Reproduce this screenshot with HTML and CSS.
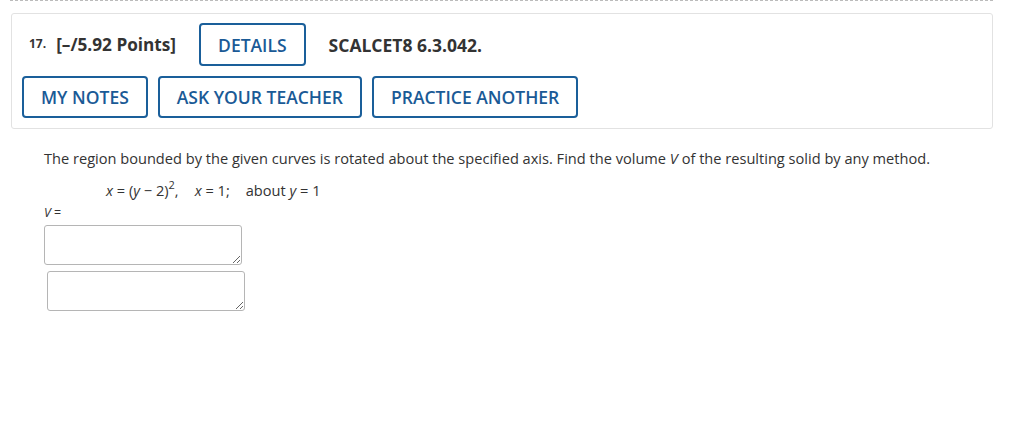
FILE: index.html
```html
<!DOCTYPE html>
<html lang="en">
<head>
    <meta charset="UTF-8">
    <title>SCALCET8 6.3.042</title>
    <link rel="stylesheet" href="styles.css">
</head>
<body>
    <div class="page">
        <div class="prev-question"></div>

        <div class="question-header">
            <div class="header-row">
                <span class="q-number">17.</span>
                <span class="q-points">[&ndash;/5.92 Points]</span>
                <button class="btn">DETAILS</button>
                <span class="q-ref">SCALCET8 6.3.042.</span>
            </div>
            <div class="action-row">
                <button class="btn">MY NOTES</button>
                <button class="btn">ASK YOUR TEACHER</button>
                <button class="btn">PRACTICE ANOTHER</button>
            </div>
        </div>

        <div class="question-body">
            <p class="prompt">The region bounded by the given curves is rotated about the specified axis. Find the volume <i>V</i> of the resulting solid by any method.</p>
            <p class="curves"><i>x</i> = (<i>y</i> &minus; 2)<sup>2</sup>,<span class="sep"></span><i>x</i> = 1;<span class="sep"></span>about <i>y</i> = 1</p>
            <div class="answer-label"><i>V</i> =</div>
            <textarea class="answer"></textarea>
            <textarea class="answer answer-second"></textarea>
        </div>
    </div>
</body>
</html>
```

FILE: styles.css
```css
* {
    box-sizing: border-box;
    margin: 0;
    padding: 0;
}
body {
    font-family: "Open Sans", Arial, sans-serif;
    color: #333;
    background-color: #fff;
}
.page {
    padding: 0 19px 0 10px;
}
.prev-question {
    border-top: 1px dashed #bbb;
}
.question-header {
    margin: 12px 0 0 1px;
    border: 1px solid #e2e2e2;
    border-radius: 3px;
    padding: 9px 10px 10px 10px;
}
.header-row {
    display: flex;
    align-items: center;
    padding-left: 7px;
}
.q-number {
    font-size: 12px;
    font-weight: 700;
    margin-right: 10px;
    position: relative;
    top: -1px;
}
.q-points {
    font-size: 17.2px;
    font-weight: 700;
    margin-right: 23px;
}
.q-ref {
    font-size: 17.5px;
    font-weight: 700;
    margin-left: 23px;
}
.action-row {
    display: flex;
    gap: 10px;
    margin-top: 10px;
}
.btn {
    font-family: "Open Sans", Arial, sans-serif;
    font-size: 17.5px;
    font-weight: 600;
    color: #1a5a96;
    background-color: #fff;
    border: 2px solid #1a5f9a;
    border-radius: 4px;
    height: 42px;
    padding: 0 17px;
}
.header-row .btn {
    height: 43px;
}
.question-body {
    padding: 19px 0 0 34px;
    font-size: 14.6px;
}
.prompt {
    line-height: 20px;
}
.curves {
    margin: 12px 0 0 62px;
    line-height: 20px;
}
.curves sup {
    font-size: 11px;
    line-height: 0;
    vertical-align: 7px;
}
.sep {
    display: inline-block;
    width: 16px;
}
.answer-label {
    font-size: 12.5px;
    margin-top: 5px;
    line-height: 15px;
}
.answer {
    display: block;
    width: 198px;
    height: 40px;
    margin-top: 5px;
    border: 1px solid #b5b5b5;
    border-radius: 3px;
    font-family: "Open Sans", Arial, sans-serif;
}
.answer-second {
    margin: 6px 0 0 3px;
}
```
